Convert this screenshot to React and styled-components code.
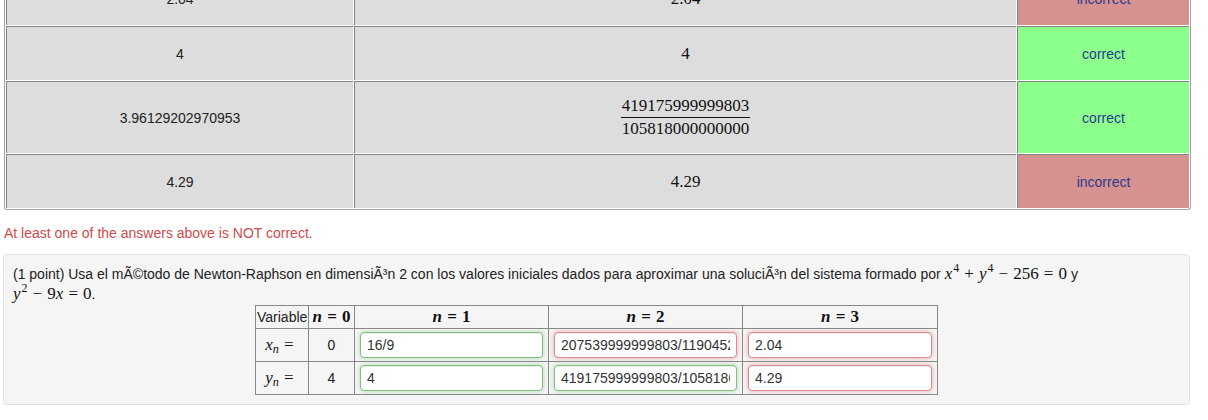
import React from "react";
import styled, { createGlobalStyle } from "styled-components";

const GlobalStyle = createGlobalStyle`
  body {
    margin: 0;
    background: #fff;
    color: #333;
    font-family: "Liberation Sans", Arial, sans-serif;
    font-size: 14px;
  }
`;

const Page = styled.div`
  width: 1188px;
  padding-left: 3px;
  margin-top: -30px;
`;

const ResultsTable = styled.table`
  table-layout: fixed;
  width: 1187px;
  margin-left: 1px;
  border-collapse: separate;
  border-spacing: 1px;
  border: 1px solid #a4a4a4;
  border-top: none;
  border-radius: 0 0 3px 3px;
`;

const bg = {
  correct: "#8cff8c",
  incorrect: "#d69191",
};

const Cell = styled.td`
  height: 53px;
  padding: 0 4px;
  border-top: 1px solid #828282;
  border-left: 1px solid #828282;
  background: ${(p) => bg[p.$status] || "#dddddd"};
  color: ${(p) => (p.$status ? "#2b3b8c" : "#222")};
  text-align: center;
  vertical-align: middle;
  font-size: 14px;
`;

const TallCell = styled(Cell)`
  height: 71px;
`;

const Math = styled.span`
  font-family: "Liberation Serif", "Times New Roman", serif;
  font-size: 17px;
  color: #111;
  white-space: nowrap;
  font-weight: ${(p) => (p.$bold ? "bold" : "normal")};
`;

const V = styled.i`
  font-style: italic;
`;

const Op = styled.span`
  margin: 0 0.3em;
`;

const Sup = styled.sup`
  font-size: 0.7em;
  line-height: 0;
  vertical-align: 0.55em;
  margin-left: 1px;
`;

const Sub = styled.sub`
  font-size: 0.72em;
  line-height: 0;
  font-style: italic;
  vertical-align: -0.25em;
`;

const Fraction = styled.span`
  display: inline-flex;
  flex-direction: column;
  align-items: center;
  vertical-align: middle;
  line-height: 22px;
`;

const Numerator = styled.span`
  padding: 0 1px;
  border-bottom: 1px solid #111;
`;

const Message = styled.p`
  margin: 14px 0 12px 1px;
  color: #cc4c4c;
  font-size: 14px;
  line-height: 18px;
`;

const ProblemBox = styled.div`
  width: 1167px;
  padding: 9px;
  background: #f5f5f5;
  border: 1px solid #e3e3e3;
  border-radius: 4px;
  line-height: 20px;
  color: #222;
`;

const IterTable = styled.table`
  margin: 1px auto 0;
  border-collapse: collapse;
  table-layout: fixed;
  width: 682px;
  line-height: normal;
`;

const HeadCell = styled.th`
  box-sizing: border-box;
  height: 23px;
  padding: 0 1px;
  border: 1px solid #888;
  font-weight: normal;
  text-align: center;
  width: ${(p) => p.$w}px;
`;

const BodyCell = styled.td`
  box-sizing: border-box;
  height: 33px;
  padding: 0 5px;
  border: 1px solid #888;
  text-align: center;
`;

const ring = {
  ok: { border: "#80bf80", glow: "rgba(92, 184, 92, 0.45)" },
  bad: { border: "#d88c8c", glow: "rgba(217, 83, 79, 0.45)" },
};

const Answer = styled.input`
  box-sizing: border-box;
  width: 100%;
  height: 26px;
  display: block;
  padding: 0 6px;
  font-family: "Liberation Sans", Arial, sans-serif;
  font-size: 14px;
  color: #333;
  background: #fff;
  border: 1px solid ${(p) => ring[p.$state].border};
  border-radius: 4px;
  box-shadow: inset 0 1px 1px rgba(0, 0, 0, 0.075), 0 0 5px ${(p) => ring[p.$state].glow};
  outline: none;
`;

const results = [
  { text: "2.04", math: "2.04", status: "incorrect" },
  { text: "4", math: "4", status: "correct" },
  { text: "3.96129202970953", frac: ["419175999999803", "105818000000000"], status: "correct" },
  { text: "4.29", math: "4.29", status: "incorrect" },
];

const rows = [
  {
    name: "x",
    start: "0",
    answers: [
      { value: "16/9", state: "ok" },
      { value: "207539999999803/119045200000000", state: "bad" },
      { value: "2.04", state: "bad" },
    ],
  },
  {
    name: "y",
    start: "4",
    answers: [
      { value: "4", state: "ok" },
      { value: "419175999999803/105818000000000", state: "ok" },
      { value: "4.29", state: "bad" },
    ],
  },
];

const App = () => {
  return (
    <Page>
      <GlobalStyle />
      <ResultsTable>
        <colgroup>
          <col style={{ width: 347 }} />
          <col style={{ width: 662 }} />
          <col style={{ width: 172 }} />
        </colgroup>
        <tbody>
          {results.map((r, i) => {
            const C = r.frac ? TallCell : Cell;
            return (
              <tr key={i}>
                <C>{r.text}</C>
                <C>
                  {r.frac ? (
                    <Math>
                      <Fraction>
                        <Numerator>{r.frac[0]}</Numerator>
                        <span>{r.frac[1]}</span>
                      </Fraction>
                    </Math>
                  ) : (
                    <Math>{r.math}</Math>
                  )}
                </C>
                <C $status={r.status}>{r.status}</C>
              </tr>
            );
          })}
        </tbody>
      </ResultsTable>

      <Message>At least one of the answers above is NOT correct.</Message>

      <ProblemBox>
        (1 point) Usa el mÃ©todo de Newton-Raphson en dimensiÃ³n 2 con los valores iniciales dados para
        aproximar una soluciÃ³n del sistema formado por{" "}
        <Math>
          <V>x</V>
          <Sup>4</Sup>
          <Op>+</Op>
          <V>y</V>
          <Sup>4</Sup>
          <Op>−</Op>256<Op>=</Op>0
        </Math>{" "}
        y
        <br />
        <Math>
          <V>y</V>
          <Sup>2</Sup>
          <Op>−</Op>9<V>x</V>
          <Op>=</Op>0
        </Math>
        .
        <IterTable>
          <thead>
            <tr>
              <HeadCell $w={53}>Variable</HeadCell>
              {[0, 1, 2, 3].map((n) => (
                <HeadCell key={n} $w={n === 0 ? 46 : n === 3 ? 195 : 194}>
                  <Math $bold>
                    <V>n</V>
                    <Op>=</Op>
                    {n}
                  </Math>
                </HeadCell>
              ))}
            </tr>
          </thead>
          <tbody>
            {rows.map((row) => (
              <tr key={row.name}>
                <BodyCell>
                  <Math>
                    <V>{row.name}</V>
                    <Sub>n</Sub>
                    <Op>=</Op>
                  </Math>
                </BodyCell>
                <BodyCell>{row.start}</BodyCell>
                {row.answers.map((a, i) => (
                  <BodyCell key={i}>
                    <Answer $state={a.state} defaultValue={a.value} />
                  </BodyCell>
                ))}
              </tr>
            ))}
          </tbody>
        </IterTable>
      </ProblemBox>
    </Page>
  );
};

export default App;
